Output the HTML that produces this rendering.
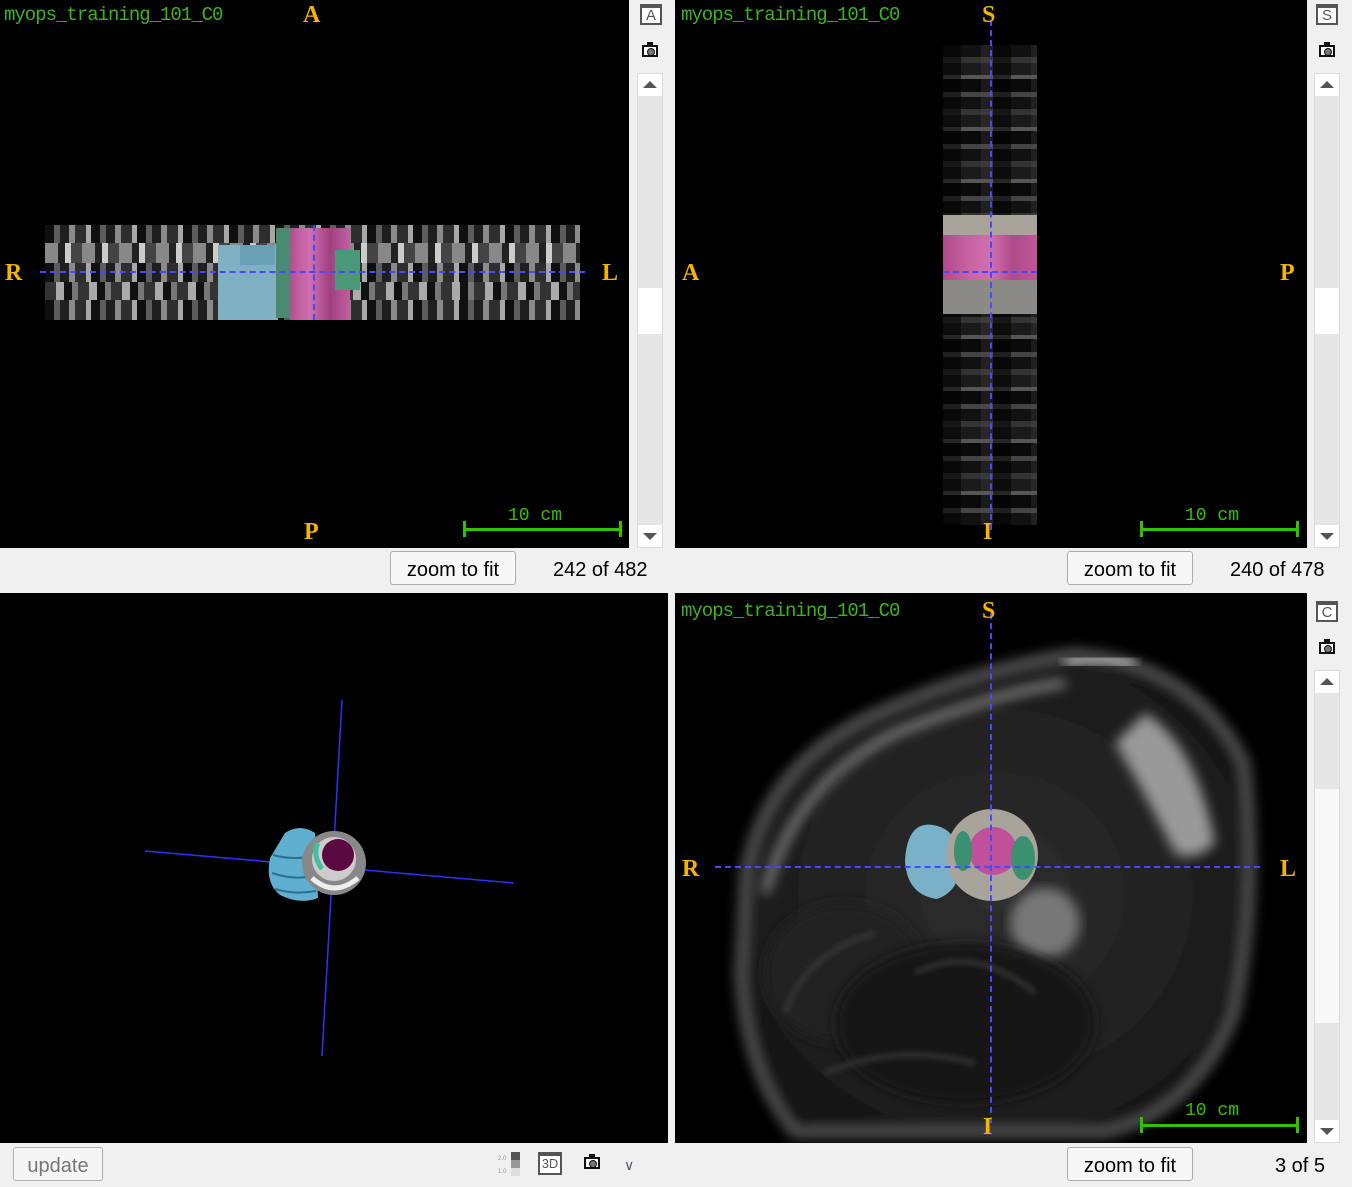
<!DOCTYPE html>
<html><head><meta charset="utf-8"><style>
*{margin:0;padding:0;box-sizing:border-box}
body{width:1352px;height:1187px;background:#f0f0f0;position:relative;overflow:hidden;font-family:"Liberation Sans",sans-serif}
.a{position:absolute}
.blk{background:#000;overflow:hidden}
.lbl{position:absolute;color:#3cb41c;font-family:"Liberation Mono",monospace;font-size:19px;letter-spacing:-1px}
.o{position:absolute;color:#f4b400;font-family:"Liberation Serif",serif;font-weight:bold;font-size:24px}
.hd{position:absolute;height:0;border-top:2px dashed #4848ff}
.vd{position:absolute;width:0;border-left:2px dashed #4848ff}
.sb{position:absolute;width:26px;background:#e6e6e6;border:1px solid #dcdcdc}
.ab{position:absolute;left:0;width:24px;height:22px;background:#fff}
.up{position:absolute;left:5px;top:7px;border-left:7px solid transparent;border-right:7px solid transparent;border-bottom:7px solid #555}
.dn{position:absolute;left:5px;top:8px;border-left:7px solid transparent;border-right:7px solid transparent;border-top:7px solid #555}
.btn{position:absolute;height:34px;border:1px solid #adadad;border-radius:3px;background:#f7f7f7;font-size:20px;text-align:center;line-height:36px;color:#000}
.txt{position:absolute;font-size:20px;color:#000}
.ico{position:absolute;width:22px;height:21px;border:2px solid #555;border-top-width:4px;background:#fff;font-size:15px;line-height:15px;text-align:center;color:#555;font-family:"Liberation Sans",sans-serif}
.cam{position:absolute;width:16px;height:12px;border:2px solid #111;background:#fff}
.cam:after{content:"";position:absolute;left:3px;top:1px;width:6px;height:6px;border:1px solid #111;border-radius:50%;background:#777}
.cam:before{content:"";position:absolute;left:3px;top:-5px;width:6px;height:3px;background:#111}
.scale{position:absolute;height:3px;background:#33c000}
.tk{position:absolute;width:3px;height:16px;background:#33c000}
.sc{position:absolute;color:#33c000;font-family:"Liberation Mono",monospace;font-size:18px}
</style></head><body>

<div class="a blk" style="left:0;top:0;width:629px;height:548px">
  <div class="a" style="left:45px;top:225px;width:535px;height:95px;background:
   repeating-linear-gradient(90deg,#111 0 9px,#666 9px 15px,#222 15px 24px,#999 24px 30px,#333 30px 41px,#bbb 41px 46px);opacity:.9"></div>
  <div class="a" style="left:45px;top:243px;width:535px;height:20px;background:repeating-linear-gradient(90deg,#888 0 13px,#222 13px 20px,#ccc 20px 26px,#444 26px 37px)"></div>
  <div class="a" style="left:45px;top:282px;width:535px;height:18px;background:repeating-linear-gradient(90deg,#333 0 11px,#aaa 11px 19px,#111 19px 27px,#777 27px 33px)"></div>
  <div class="a" style="left:218px;top:245px;width:60px;height:75px;background:#7fb0c4"></div>
  <div class="a" style="left:240px;top:245px;width:35px;height:20px;background:#6aa0b5"></div>
  <div class="a" style="left:276px;top:228px;width:20px;height:90px;background:#4a8a70"></div>
  <div class="a" style="left:290px;top:228px;width:60px;height:92px;background:linear-gradient(90deg,#b05090,#d070b0,#a04080,#c060a0)"></div>
  <div class="a" style="left:335px;top:250px;width:25px;height:40px;background:#4a9a7a"></div>
  <div class="hd" style="left:40px;top:271px;width:545px"></div>
  <div class="vd" style="left:313px;top:225px;height:95px"></div>
  <div class="lbl" style="left:4px;top:4px">myops_training_101_C0</div>
  <div class="o" style="left:303px;top:2px">A</div>
  <div class="o" style="left:5px;top:260px">R</div>
  <div class="o" style="left:602px;top:260px">L</div>
  <div class="o" style="left:304px;top:519px">P</div>
  <div class="sc" style="left:508px;top:506px">10 cm</div>
  <div class="scale" style="left:463px;top:528px;width:159px"></div>
  <div class="tk" style="left:463px;top:521px"></div><div class="tk" style="left:619px;top:521px"></div>
</div>
<div class="ico" style="left:640px;top:4px">A</div>
<div class="cam" style="left:642px;top:45px"></div>
<div class="sb" style="left:637px;top:73px;height:475px">
  <div class="ab" style="top:0"><div class="up"></div></div>
  <div class="a" style="left:0;top:214px;width:24px;height:46px;background:#fff"></div>
  <div class="ab" style="top:451px"><div class="dn"></div></div>
</div>

<div class="a blk" style="left:675px;top:0;width:632px;height:548px">
  <div class="a" style="left:268px;top:45px;width:94px;height:480px;background:
   repeating-linear-gradient(180deg,#111 0 12px,#333 12px 18px,#1a1a1a 18px 30px,#555 30px 34px,#0a0a0a 34px 47px,#444 47px 52px);"></div>
  <div class="a" style="left:268px;top:45px;width:94px;height:480px;background:repeating-linear-gradient(90deg,rgba(0,0,0,.55) 0 18px,transparent 18px 38px,rgba(90,90,90,.2) 38px 50px)"></div>
  <div class="a" style="left:268px;top:215px;width:94px;height:22px;background:#a8a49c"></div>
  <div class="a" style="left:268px;top:235px;width:94px;height:48px;background:linear-gradient(90deg,#b04a8a,#c860a0,#d070b0,#b04a8a,#c05898)"></div>
  <div class="a" style="left:268px;top:280px;width:94px;height:34px;background:#8c8a86"></div>
  <div class="hd" style="left:268px;top:271px;width:94px"></div>
  <div class="vd" style="left:315px;top:20px;height:510px"></div>
  <div class="lbl" style="left:6px;top:4px">myops_training_101_C0</div>
  <div class="o" style="left:307px;top:2px">S</div>
  <div class="o" style="left:7px;top:260px">A</div>
  <div class="o" style="left:605px;top:260px">P</div>
  <div class="o" style="left:308px;top:519px">I</div>
  <div class="sc" style="left:510px;top:506px">10 cm</div>
  <div class="scale" style="left:465px;top:528px;width:159px"></div>
  <div class="tk" style="left:465px;top:521px"></div><div class="tk" style="left:621px;top:521px"></div>
</div>
<div class="ico" style="left:1316px;top:4px">S</div>
<div class="cam" style="left:1319px;top:45px"></div>
<div class="sb" style="left:1314px;top:73px;height:475px">
  <div class="ab" style="top:0"><div class="up"></div></div>
  <div class="a" style="left:0;top:214px;width:24px;height:46px;background:#fff"></div>
  <div class="ab" style="top:451px"><div class="dn"></div></div>
</div>

<div class="btn" style="left:390px;top:551px;width:126px">zoom to fit</div>
<div class="txt" style="left:553px;top:559px">242 of 482</div>
<div class="btn" style="left:1067px;top:551px;width:126px">zoom to fit</div>
<div class="txt" style="left:1230px;top:559px">240 of 478</div>

<div class="a blk" style="left:0;top:593px;width:668px;height:550px">
  <svg width="668" height="550" style="position:absolute;left:0;top:0">
    <line x1="342" y1="107" x2="322" y2="463" stroke="#3030ff" stroke-width="1.5"/>
    <line x1="145" y1="258" x2="514" y2="290" stroke="#3030ff" stroke-width="1.5"/>
    <path d="M285 240 Q300 230 315 240 L318 305 Q300 312 280 302 Q265 290 270 265 Z" fill="#5fb0d0"/>
    <path d="M273 262 Q295 268 318 262 M272 280 Q295 288 318 282 M275 296 Q295 302 316 298" stroke="#2a7090" stroke-width="2" fill="none"/>
    <circle cx="334" cy="270" r="32" fill="#888"/>
    <circle cx="334" cy="266" r="22" fill="#ccc"/>
    <circle cx="338" cy="262" r="16" fill="#5a0a40"/>
    <path d="M318 250 Q312 262 322 276" stroke="#40c0a0" stroke-width="5" fill="none"/>
    <path d="M312 285 Q334 305 358 285" stroke="#eee" stroke-width="5" fill="none"/>
  </svg>
</div>

<div class="a blk" style="left:675px;top:593px;width:632px;height:550px">
  <svg width="632" height="550" style="position:absolute;left:0;top:0">
    <defs>
      <radialGradient id="g1" cx="50%" cy="50%" r="60%"><stop offset="0" stop-color="#2e2e2e"/><stop offset="0.8" stop-color="#1c1c1c"/><stop offset="1" stop-color="#111"/></radialGradient>
      <filter id="bl"><feGaussianBlur stdDeviation="6"/></filter>
      <filter id="bl2"><feGaussianBlur stdDeviation="3"/></filter>
    </defs>
    <path d="M70 280 Q90 170 200 120 Q300 75 400 60 Q520 70 570 170 Q585 300 560 420 Q520 520 430 540 L120 540 Q70 480 65 380 Z" fill="url(#g1)" stroke="#555" stroke-width="10" filter="url(#bl)"/>
    <path d="M90 300 Q120 190 220 140 Q320 100 390 90" stroke="#888" stroke-width="8" fill="none" filter="url(#bl)"/>
    <path d="M470 120 Q520 150 540 250 Q520 270 500 260 Q470 200 440 150 Z" fill="#999" filter="url(#bl)"/>
    <path d="M390 70 Q430 60 460 72" stroke="#bbb" stroke-width="10" fill="none" filter="url(#bl)"/>
    <ellipse cx="370" cy="330" rx="35" ry="35" fill="#777" filter="url(#bl)"/>
    <ellipse cx="170" cy="380" rx="80" ry="70" fill="#222" filter="url(#bl)"/>
    <ellipse cx="290" cy="430" rx="130" ry="80" fill="#141414" filter="url(#bl)"/>
    <path d="M110 420 Q130 360 200 340 M240 380 Q300 350 360 400 M150 480 Q220 450 300 470" stroke="#3a3a3a" stroke-width="4" fill="none" filter="url(#bl2)"/>
    <path d="M258 232 Q232 228 230 268 Q232 302 262 306 Q285 298 285 270 Q284 236 258 232Z" fill="#7ab0c8"/>
    <ellipse cx="317" cy="262" rx="46" ry="46" fill="#a8a49c"/>
    <ellipse cx="318" cy="258" rx="24" ry="24" fill="#c0509a"/>
    <ellipse cx="288" cy="258" rx="9" ry="20" fill="#3a9070"/>
    <ellipse cx="348" cy="265" rx="12" ry="22" fill="#3a9070"/>
  </svg>
  <div class="hd" style="left:40px;top:273px;width:545px"></div>
  <div class="vd" style="left:315px;top:20px;height:510px"></div>
  <div class="lbl" style="left:6px;top:7px">myops_training_101_C0</div>
  <div class="o" style="left:307px;top:5px">S</div>
  <div class="o" style="left:7px;top:263px">R</div>
  <div class="o" style="left:605px;top:263px">L</div>
  <div class="o" style="left:308px;top:521px">I</div>
  <div class="sc" style="left:510px;top:508px">10 cm</div>
  <div class="scale" style="left:465px;top:531px;width:159px"></div>
  <div class="tk" style="left:465px;top:524px"></div><div class="tk" style="left:621px;top:524px"></div>
</div>
<div class="ico" style="left:1316px;top:601px">C</div>
<div class="cam" style="left:1319px;top:642px"></div>
<div class="sb" style="left:1314px;top:670px;height:473px">
  <div class="ab" style="top:0"><div class="up"></div></div>
  <div class="a" style="left:0;top:118px;width:24px;height:234px;background:#f8f8f8"></div>
  <div class="ab" style="top:449px"><div class="dn"></div></div>
</div>

<div class="btn" style="left:13px;top:1147px;width:90px;color:#777;background:#f5f5f5">update</div>
<div class="a" style="left:498px;top:1153px;font-size:6px;color:#999;line-height:13px">2.0<br>1.0</div>
<div class="a" style="left:511px;top:1152px;width:9px;height:24px;background:linear-gradient(#555 0 33%,#999 33% 66%,#ddd 66%)"></div>
<div class="ico" style="left:538px;top:1152px;width:24px;height:23px;font-size:13px">3D</div>
<div class="cam" style="left:584px;top:1157px"></div>
<div class="a" style="left:624px;top:1157px;font-size:14px;color:#556">&#x2228;</div>
<div class="btn" style="left:1067px;top:1147px;width:126px">zoom to fit</div>
<div class="txt" style="left:1275px;top:1155px">3 of 5</div>
</body></html>
